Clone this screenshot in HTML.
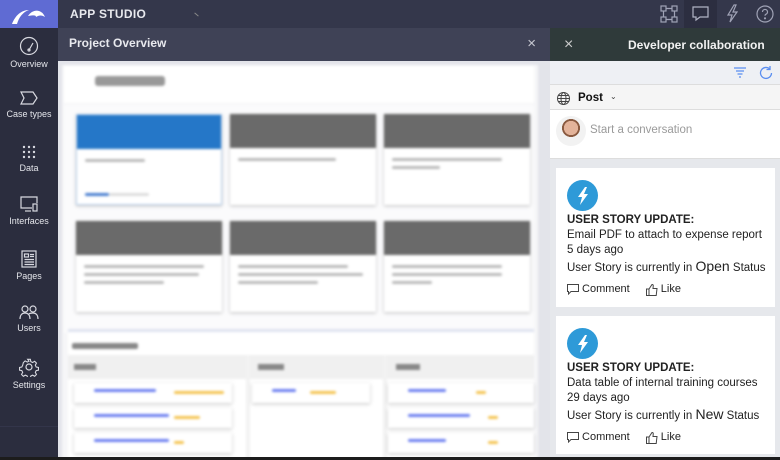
<!DOCTYPE html>
<html><head><meta charset="utf-8"><style>
*{box-sizing:border-box;margin:0;padding:0}
body{width:780px;height:460px;overflow:hidden;font-family:"Liberation Sans",sans-serif;background:#1c1c1c;position:relative}
.abs{position:absolute}
#top{left:0;top:0;width:780px;height:28px;background:#34374b}
#logo{left:0;top:0;width:58px;height:28px;background:#5f6bd3}
#side{left:0;top:28px;width:58px;height:429px;background:#2b2d3e}
.nav{position:absolute;left:0;width:58px;text-align:center;color:#e4e5ea;font-size:9px}
.nav svg{display:block;margin:0 auto 3px}
#mh{left:58px;top:28px;width:492px;height:33px;background:#3f4256;color:#e8e9ee;font-weight:bold;font-size:12px;padding:8px 0 0 11px}
#main{left:58px;top:61px;width:492px;height:396px;background:#e3e4ea;overflow:hidden}
#blur{position:absolute;left:0;top:0;width:492px;height:396px;filter:blur(1.3px)}
.card{position:absolute;width:146px;height:91px;background:#fff;box-shadow:0 1px 3px rgba(0,0,0,.25)}
.ch{height:34px;background:#6a6a6a}
.ln{position:absolute;height:3px;background:#bbb;border-radius:2px}
#rh{left:550px;top:28px;width:230px;height:33px;background:#2f3a3a;color:#f2f2f2;font-size:12px;font-weight:bold}
#rp{left:550px;top:61px;width:230px;height:396px;background:#e6e8ec}
.post{position:absolute;left:6px;width:219px;background:#fff;font-size:11.5px;color:#222;padding:12px 0 0 11px;line-height:15px}
.bolt{width:31px;height:31px;border-radius:50%;background:#2e9ad8;margin-bottom:2px;display:flex;align-items:center;justify-content:center}
.act{margin-top:6px;font-size:11px;display:flex;align-items:center}
</style></head><body>
<div id="top" class="abs">
 <div class="abs" style="left:70px;top:7px;color:#e8e9ee;font-weight:bold;font-size:12px;letter-spacing:.3px">APP STUDIO</div>
 <div class="abs" style="left:194px;top:14px;width:5px;height:1px;background:#888;transform:rotate(40deg)"></div>
 <svg class="abs" style="left:660px;top:5px" width="18" height="18" viewBox="0 0 18 18" fill="none" stroke="#a0a3b6" stroke-width="1.2"><rect x="1" y="1" width="5" height="5"/><rect x="12" y="1" width="5" height="5"/><rect x="1" y="12" width="5" height="5"/><rect x="12" y="12" width="5" height="5"/><path d="M6 3.5h6M6 14.5h6M3.5 6v6M14.5 6v6"/></svg>
 <div class="abs" style="left:684px;top:0;width:33px;height:28px;background:#2c2e40"></div>
 <svg class="abs" style="left:692px;top:6px" width="17" height="16" viewBox="0 0 17 16" fill="none" stroke="#b0b3c4" stroke-width="1.2"><path d="M1 1h15v10H8l-4 3v-3H1z"/></svg>
 <svg class="abs" style="left:726px;top:4px" width="12" height="19" viewBox="0 0 12 19" fill="none" stroke="#a0a3b6" stroke-width="1.2"><path d="M8 1L2 11h4l-2 7 7-10H7l3-7z"/></svg>
 <svg class="abs" style="left:756px;top:5px" width="18" height="18" viewBox="0 0 18 18" fill="none" stroke="#a0a3b6" stroke-width="1.2"><circle cx="9" cy="9" r="8"/><path d="M6.5 7a2.5 2.5 0 1 1 3.3 2.3c-.6.3-.8.7-.8 1.5"/><circle cx="9" cy="13.3" r=".5" fill="#a0a3b6"/></svg>
</div>
<div id="logo" class="abs"><svg width="58" height="28" viewBox="0 0 58 28"><path d="M12 24c3-8 9-14 17-14-6 2-10 7-12 14z" fill="#fff"/><path d="M28 16c3-5 9-7 13-4 2 1 3 3 4 5-3-2-6-2-9 0 0-2-2-2-8-1z" fill="#fff"/></svg></div>
<div id="side" class="abs">
 <div class="nav" style="top:8px"><svg width="20" height="20" viewBox="0 0 20 20" fill="none" stroke="#d8d9e0" stroke-width="1.2"><circle cx="10" cy="10" r="8.5"/><path d="M10 14l4-7"/><circle cx="10" cy="14" r="1"/></svg>Overview</div>
 <div class="nav" style="top:62px"><svg width="20" height="16" viewBox="0 0 20 16" fill="none" stroke="#d8d9e0" stroke-width="1.2"><path d="M2 2h12l4 6-4 6H2l3-6z"/></svg>Case types</div>
 <div class="nav" style="top:116px"><svg width="16" height="16" viewBox="0 0 16 16" fill="#d8d9e0"><circle cx="3" cy="3" r="1.2"/><circle cx="8" cy="3" r="1.2"/><circle cx="13" cy="3" r="1.2"/><circle cx="3" cy="8" r="1.2"/><circle cx="8" cy="8" r="1.2"/><circle cx="13" cy="8" r="1.2"/><circle cx="3" cy="13" r="1.2"/><circle cx="8" cy="13" r="1.2"/><circle cx="13" cy="13" r="1.2"/></svg>Data</div>
 <div class="nav" style="top:167px"><svg width="20" height="18" viewBox="0 0 20 18" fill="none" stroke="#d8d9e0" stroke-width="1.2"><path d="M13 13H2V2h16v6"/><path d="M6 16h6"/><rect x="14" y="9" width="4" height="7"/></svg>Interfaces</div>
 <div class="nav" style="top:222px"><svg width="18" height="18" viewBox="0 0 18 18" fill="none" stroke="#d8d9e0" stroke-width="1.2"><rect x="2" y="1" width="14" height="16"/><rect x="4.5" y="4" width="4" height="3"/><path d="M10 4.5h4M10 6.5h4M4.5 9.5h9.5M4.5 12h9.5M4.5 14.5h9.5"/></svg>Pages</div>
 <div class="nav" style="top:276px"><svg width="20" height="16" viewBox="0 0 20 16" fill="none" stroke="#d8d9e0" stroke-width="1.2"><circle cx="6" cy="5" r="3"/><circle cx="14" cy="5" r="3"/><path d="M1 15c0-4 2-6 5-6s5 2 5 6M10 10c1-1 2-1 4-1 3 0 5 2 5 6"/></svg>Users</div>
 <div class="nav" style="top:329px"><svg width="20" height="20" viewBox="0 0 20 20" fill="none" stroke="#d8d9e0" stroke-width="1.2"><circle cx="10" cy="10" r="3"/><path d="M8.5 1.5h3l.5 2.5 2 1 2.3-1.3 2 2-1.3 2.3 1 2 2.5.5v3l-2.5.5-1 2 1.3 2.3-2 2-2.3-1.3-2 1-.5 2.5h-3l-.5-2.5-2-1-2.3 1.3-2-2 1.3-2.3-1-2-2.5-.5v-3l2.5-.5 1-2L3.7 5.2l2-2L8 4.5l2-1z" transform="translate(10 10) scale(.9) translate(-10 -10)"/></svg>Settings</div>
 <div class="abs" style="left:0;top:398px;width:58px;height:1px;background:#33354a"></div>
</div>
<div id="mh" class="abs">Project Overview<span style="position:absolute;right:14px;top:7px;font-weight:normal;font-size:15px;color:#c8c9d2">×</span></div>
<div id="main" class="abs"><div id="blur">
 <div class="abs" style="left:4px;top:4px;width:476px;height:400px;background:#f6f6f8"></div>
 <div class="abs" style="left:6px;top:5px;width:470px;height:37px;background:#fff"></div>
 <div class="abs" style="left:37px;top:15px;width:70px;height:10px;background:#999;border-radius:3px"></div>
 <div class="abs" style="left:6px;top:44px;width:470px;height:228px;background:#fbfbfc"></div>
 <div class="card" style="left:18px;top:53px;border:1px solid #bcd4f0"><div class="ch" style="background:#2577c8"></div><div class="ln" style="left:8px;top:44px;width:60px"></div><div class="ln" style="left:8px;top:78px;width:24px;background:#4a7fd0"></div><div class="ln" style="left:32px;top:78px;width:40px;background:#ddd"></div></div>
 <div class="card" style="left:172px;top:53px"><div class="ch"></div><div class="ln" style="left:8px;top:44px;width:98px"></div></div>
 <div class="card" style="left:326px;top:53px"><div class="ch"></div><div class="ln" style="left:8px;top:44px;width:110px"></div><div class="ln" style="left:8px;top:52px;width:48px"></div></div>
 <div class="card" style="left:18px;top:160px"><div class="ch"></div><div class="ln" style="left:8px;top:44px;width:120px"></div><div class="ln" style="left:8px;top:52px;width:115px"></div><div class="ln" style="left:8px;top:60px;width:80px"></div></div>
 <div class="card" style="left:172px;top:160px"><div class="ch"></div><div class="ln" style="left:8px;top:44px;width:110px"></div><div class="ln" style="left:8px;top:52px;width:125px"></div><div class="ln" style="left:8px;top:60px;width:80px"></div></div>
 <div class="card" style="left:326px;top:160px"><div class="ch"></div><div class="ln" style="left:8px;top:44px;width:110px"></div><div class="ln" style="left:8px;top:52px;width:110px"></div><div class="ln" style="left:8px;top:60px;width:40px"></div></div>
 <div class="abs" style="left:10px;top:268px;width:466px;height:3px;background:#dfe3f0"></div>
 <div class="abs" style="left:10px;top:271px;width:466px;height:130px;background:#fff"></div>
 <div class="abs" style="left:14px;top:282px;width:66px;height:6px;background:#888;border-radius:2px"></div>
 <div class="abs" style="left:10px;top:294px;width:466px;height:24px;background:#f0f0f0"></div>
 <div class="abs" style="left:188px;top:294px;width:4px;height:110px;background:#f2f2f2"></div>
 <div class="abs" style="left:325px;top:294px;width:4px;height:110px;background:#f2f2f2"></div>
 <div class="abs" style="left:16px;top:303px;width:22px;height:6px;background:#888"></div>
 <div class="abs" style="left:200px;top:303px;width:26px;height:6px;background:#888"></div>
 <div class="abs" style="left:338px;top:303px;width:24px;height:6px;background:#888"></div>
 <div class="card" style="left:16px;top:322px;width:158px;height:20px"><div class="ln" style="left:20px;top:6px;width:62px;background:#6c7ff0"></div><div class="ln" style="left:100px;top:8px;width:50px;background:#f5c451"></div></div>
 <div class="card" style="left:16px;top:347px;width:158px;height:20px"><div class="ln" style="left:20px;top:6px;width:75px;background:#6c7ff0"></div><div class="ln" style="left:100px;top:8px;width:26px;background:#f5c451"></div></div>
 <div class="card" style="left:16px;top:372px;width:158px;height:20px"><div class="ln" style="left:20px;top:6px;width:75px;background:#6c7ff0"></div><div class="ln" style="left:100px;top:8px;width:10px;background:#f5c451"></div></div>
 <div class="card" style="left:194px;top:322px;width:118px;height:20px"><div class="ln" style="left:20px;top:6px;width:24px;background:#6c7ff0"></div><div class="ln" style="left:58px;top:8px;width:26px;background:#f5c451"></div></div>
 <div class="card" style="left:330px;top:322px;width:146px;height:20px"><div class="ln" style="left:20px;top:6px;width:38px;background:#6c7ff0"></div><div class="ln" style="left:88px;top:8px;width:10px;background:#f5c451"></div></div>
 <div class="card" style="left:330px;top:347px;width:146px;height:20px"><div class="ln" style="left:20px;top:6px;width:62px;background:#6c7ff0"></div><div class="ln" style="left:100px;top:8px;width:10px;background:#f5c451"></div></div>
 <div class="card" style="left:330px;top:372px;width:146px;height:20px"><div class="ln" style="left:20px;top:6px;width:38px;background:#6c7ff0"></div><div class="ln" style="left:100px;top:8px;width:10px;background:#f5c451"></div></div>
</div></div>
<div id="rh" class="abs"><span style="position:absolute;left:14px;top:8px;font-weight:normal;font-size:16px;color:#ccc">×</span><span style="position:absolute;left:78px;top:10px">Developer collaboration</span></div>
<div id="rp" class="abs">
 <div class="abs" style="left:0;top:0;width:230px;height:23px;background:#eef0f4"></div>
 <svg class="abs" style="left:184px;top:6px" width="12" height="11" viewBox="0 0 12 11" stroke="#5a8ef0" stroke-width="1.3"><path d="M0 1h12M2 4h8M3.5 7h5M5 10h2"/></svg>
 <svg class="abs" style="left:208px;top:4px" width="16" height="16" viewBox="0 0 16 16" fill="none" stroke="#5a8ef0" stroke-width="1.3"><path d="M13.5 8a5.5 5.5 0 1 1-2-4.3"/><path d="M12 1v3.5H8.5"/></svg>
 <div class="abs" style="left:0;top:23px;width:230px;height:26px;background:#f5f5f5;border-top:1px solid #ddd;border-bottom:1px solid #ddd"></div>
 <svg class="abs" style="left:7px;top:31px" width="13" height="13" viewBox="0 0 13 13" fill="none" stroke="#444" stroke-width="1"><circle cx="6.5" cy="6.5" r="6"/><ellipse cx="6.5" cy="6.5" rx="2.5" ry="6"/><path d="M.5 6.5h12M1.5 3.5h10M1.5 9.5h10"/></svg>
 <div class="abs" style="left:28px;top:31px;font-weight:bold;font-size:11.5px;color:#111">Post</div>
 <div class="abs" style="left:60px;top:31px;font-size:8px;color:#444">⌄</div>
 <div class="abs" style="left:0;top:49px;width:230px;height:49px;background:#fff;border-bottom:1px solid #ddd"></div>
 <div class="abs" style="left:6px;top:55px;width:30px;height:30px;border-radius:50%;background:radial-gradient(circle at 50% 40%,#e3b39a 0 30%,#8a5a40 31% 38%,#f2f2f2 39%)"></div>
 <div class="abs" style="left:40px;top:63px;font-size:11.5px;color:#9a9a9a">Start a conversation</div>
 <div class="post" style="top:107px;height:139px">
  <div class="bolt"><svg width="14" height="18" viewBox="0 0 14 18"><path d="M9 0L2 10h4l-2 8 8-11H8l3-7z" fill="#fff"/></svg></div>
  <div style="font-weight:bold">USER STORY UPDATE:</div><div>Email PDF to attach to expense report</div><div>5 days ago</div>
  <div style="margin-top:1px">User Story is currently in <span style="font-size:14px">Open</span> Status</div>
  <div class="act"><svg width="12" height="11" viewBox="0 0 12 11" fill="none" stroke="#444"><path d="M.5.5h11v7H4l-2.5 2.5V7.5H.5z"/></svg>&nbsp;Comment<span style="width:16px"></span><svg width="12" height="12" viewBox="0 0 12 12" fill="none" stroke="#444"><path d="M.5 5h2.5v6.5H.5zM3 5l3-4.5c1 0 1.5.5 1.2 2L7 4.5h4l-.8 7H3"/></svg>&nbsp;Like</div>
 </div>
 <div class="post" style="top:255px;height:138px">
  <div class="bolt"><svg width="14" height="18" viewBox="0 0 14 18"><path d="M9 0L2 10h4l-2 8 8-11H8l3-7z" fill="#fff"/></svg></div>
  <div style="font-weight:bold">USER STORY UPDATE:</div><div>Data table of internal training courses</div><div>29 days ago</div>
  <div style="margin-top:1px">User Story is currently in <span style="font-size:14px">New</span> Status</div>
  <div class="act"><svg width="12" height="11" viewBox="0 0 12 11" fill="none" stroke="#444"><path d="M.5.5h11v7H4l-2.5 2.5V7.5H.5z"/></svg>&nbsp;Comment<span style="width:16px"></span><svg width="12" height="12" viewBox="0 0 12 12" fill="none" stroke="#444"><path d="M.5 5h2.5v6.5H.5zM3 5l3-4.5c1 0 1.5.5 1.2 2L7 4.5h4l-.8 7H3"/></svg>&nbsp;Like</div>
 </div>
</div>
</body></html>
